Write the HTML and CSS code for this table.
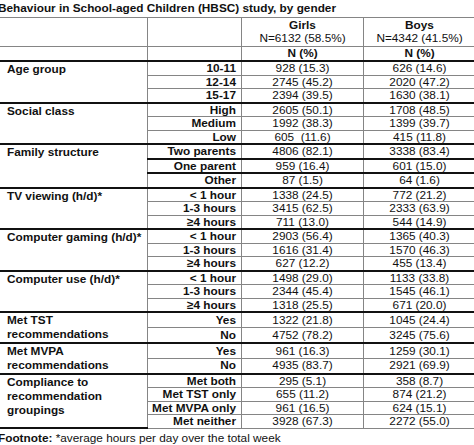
FILE: index.html
```html
<!DOCTYPE html>
<html>
<head>
<meta charset="utf-8">
<link rel="stylesheet" href="styles.css">
</head>
<body>
<div class="page">
  <div class="title">Behaviour in School-aged Children (HBSC) study, by gender</div>
  <table class="tbl">
    <colgroup>
      <col class="c1"><col class="c2"><col class="c3"><col class="c4">
    </colgroup>
    <thead>
      <tr class="h1">
        <th></th><th></th>
        <th><b>Girls</b><br><span class="reg">N=6132 (58.5%)</span></th>
        <th><b>Boys</b><br><span class="reg">N=4342 (41.5%)</span></th>
      </tr>
      <tr class="h2 end">
        <th></th><th></th><th>N (%)</th><th>N (%)</th>
      </tr>
    </thead>
    <tbody>
      <tr><td class="lab" rowspan="3">Age group</td><td class="cat">10-11</td><td>928 (15.3)</td><td>626 (14.6)</td></tr>
      <tr><td class="cat">12-14</td><td>2745 (45.2)</td><td>2020 (47.2)</td></tr>
      <tr class="end"><td class="cat">15-17</td><td>2394 (39.5)</td><td>1630 (38.1)</td></tr>

      <tr><td class="lab" rowspan="3">Social class</td><td class="cat">High</td><td>2605 (50.1)</td><td>1708 (48.5)</td></tr>
      <tr><td class="cat">Medium</td><td>1992 (38.3)</td><td>1399 (39.7)</td></tr>
      <tr class="end"><td class="cat">Low</td><td>605&nbsp; (11.6)</td><td>415 (11.8)</td></tr>

      <tr class="end"><td class="lab" rowspan="3">Family structure</td><td class="cat">Two parents</td><td>4806 (82.1)</td><td>3338 (83.4)</td></tr>
      <tr class="end"><td class="cat">One parent</td><td>959 (16.4)</td><td>601 (15.0)</td></tr>
      <tr class="end"><td class="cat">Other</td><td>87 (1.5)</td><td>64 (1.6)</td></tr>

      <tr><td class="lab" rowspan="3">TV viewing (h/d)*</td><td class="cat">&lt; 1 hour</td><td>1338 (24.5)</td><td>772 (21.2)</td></tr>
      <tr><td class="cat">1-3 hours</td><td>3415 (62.5)</td><td>2333 (63.9)</td></tr>
      <tr class="end"><td class="cat">≥4 hours</td><td>711 (13.0)</td><td>544 (14.9)</td></tr>

      <tr><td class="lab" rowspan="3">Computer gaming (h/d)*</td><td class="cat">&lt; 1 hour</td><td>2903 (56.4)</td><td>1365 (40.3)</td></tr>
      <tr><td class="cat">1-3 hours</td><td>1616 (31.4)</td><td>1570 (46.3)</td></tr>
      <tr class="end"><td class="cat">≥4 hours</td><td>627 (12.2)</td><td>455 (13.4)</td></tr>

      <tr><td class="lab" rowspan="3">Computer use (h/d)*</td><td class="cat">&lt; 1 hour</td><td>1498 (29.0)</td><td>1133 (33.8)</td></tr>
      <tr><td class="cat">1-3 hours</td><td>2344 (45.4)</td><td>1545 (46.1)</td></tr>
      <tr class="end"><td class="cat">≥4 hours</td><td>1318 (25.5)</td><td>671 (20.0)</td></tr>

      <tr><td class="lab" rowspan="2">Met TST<br>recommendations</td><td class="cat">Yes</td><td>1322 (21.8)</td><td>1045 (24.4)</td></tr>
      <tr class="end"><td class="cat">No</td><td>4752 (78.2)</td><td>3245 (75.6)</td></tr>

      <tr><td class="lab" rowspan="2">Met MVPA<br>recommendations</td><td class="cat">Yes</td><td>961 (16.3)</td><td>1259 (30.1)</td></tr>
      <tr class="end"><td class="cat">No</td><td>4935 (83.7)</td><td>2921 (69.9)</td></tr>

      <tr><td class="lab" rowspan="4">Compliance to<br>recommendation<br>groupings</td><td class="cat">Met both</td><td>295 (5.1)</td><td>358 (8.7)</td></tr>
      <tr><td class="cat">Met TST only</td><td>655 (11.2)</td><td>874 (21.2)</td></tr>
      <tr><td class="cat">Met MVPA only</td><td>961 (16.5)</td><td>624 (15.1)</td></tr>
      <tr class="last"><td class="cat">Met neither</td><td>3928 (67.3)</td><td>2272 (55.0)</td></tr>
    </tbody>
  </table>
  <div class="foot"><b>Footnote:</b> *average hours per day over the total week</div>
</div>
</body>
</html>
```

FILE: styles.css
```css
html, body {
  margin: 0;
  padding: 0;
  background: #fff;
}
body {
  font-family: "Liberation Sans", Arial, sans-serif;
  font-size: 11.8px;
  color: #111;
}
.page {
  margin-left: -2px;
  width: 477px;
}
.title {
  font-weight: bold;
  height: 17px;
  line-height: 16px;
}
.tbl {
  border-collapse: collapse;
  table-layout: fixed;
  width: 477px;
}
.c1 { width: 149px; }
.c2 { width: 94px; }
.c3 { width: 122px; }
.c4 { width: 112px; }
.tbl th, .tbl td {
  border: 1px solid #858585;
  padding: 0;
  line-height: 12.5px;
  height: 12.5px;
  text-align: center;
  font-weight: normal;
}
.tbl th { font-weight: bold; }
.tbl .h1 th {
  height: 28px;
  line-height: 13.5px;
}
.tbl .h2 th {
  height: 13px;
  line-height: 13px;
}
.tbl .reg { font-weight: normal; }
.tbl tr.end td, .tbl tr.end th {
  border-bottom: 2px solid #111;
}
.tbl td.lab {
  text-align: left;
  vertical-align: top;
  font-weight: bold;
  padding-left: 8px;
  line-height: 14.4px;
  border-bottom: 2px solid #111;
}
.tbl td.cat {
  text-align: right;
  font-weight: bold;
  padding-right: 5px;
}
.foot {
  line-height: 16px;
  margin-top: 1px;
}
```
